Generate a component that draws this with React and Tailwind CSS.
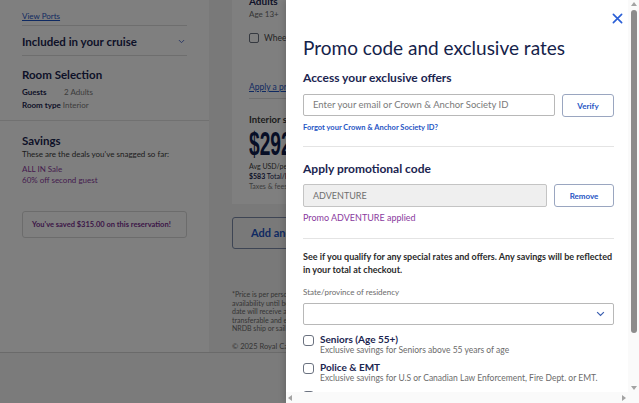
import React from 'react'

const font = { fontFamily: 'Lato, "Liberation Sans", sans-serif' }

const Chevron = ({ className }) => (
  <svg viewBox="0 0 12 8" className={className} fill="none" stroke="currentColor" strokeWidth="1.6">
    <path d="M1.5 1.5 6 6l4.5-4.5" />
  </svg>
)

const Check = ({ title, sub }) => (
  <div className="flex items-start gap-[6px]">
    <div className="w-[11px] h-[11px] mt-[1px] rounded-[3px] border border-[#6b7280] bg-white shrink-0" />
    <div className="flex flex-col">
      <span className="text-[10px] leading-[11px] font-bold text-[#1b2550]">{title}</span>
      <span className="text-[8.5px] leading-[11px] text-[#6b6b6b]">{sub}</span>
    </div>
  </div>
)

const Page = () => (
  <div className="w-[639px] h-[403px] flex flex-col bg-[#f2f2f2] text-[#1b2550]" style={font}>
    <div className="flex h-[352px]">
      {/* left summary column */}
      <div className="w-[209px] bg-white flex flex-col">
        <div className="px-[22px]">
          <div className="h-[26px] pt-[1px] border-b border-[#dcdcdc]">
            <span className="text-[8px] text-[#1f55c4] underline">View Ports</span>
          </div>
          <div className="h-[30px] pt-[2px] flex items-center justify-between border-b border-[#dcdcdc]">
            <span className="text-[11.5px] font-bold">Included in your cruise</span>
            <Chevron className="w-[7px] h-[5px] mr-[2px] text-[#4d6bc9]" />
          </div>
          <div className="pt-[12px] h-[64px]">
            <div className="text-[11.5px] font-bold leading-[14px]">Room Selection</div>
            <div className="mt-[4px] text-[8px] leading-[13px]">
              <div><span className="font-bold inline-block w-[42px]">Guests</span><span className="text-[#7a7a7a]">2 Adults</span></div>
              <div><span className="font-bold">Room type</span> <span className="text-[#7a7a7a]">Interior</span></div>
            </div>
          </div>
        </div>
        <div className="border-t border-[#e2e2e2] px-[22px] pt-[13px] flex-1">
          <div className="text-[11.5px] font-bold leading-[14px]">Savings</div>
          <div className="text-[8px] leading-[12px] text-[#3a3a3a]">These are the deals you've snagged so far:</div>
          <div className="mt-[4px] text-[8px] leading-[11px] text-[#8a3a9e]">
            <div>ALL IN Sale</div>
            <div>60% off second guest</div>
          </div>
          <div className="mt-[25px] h-[27px] border border-[#d8d8d8] rounded-[3px] flex items-center px-[9px] whitespace-nowrap">
            <span className="text-[7.5px] font-bold text-[#7a2f8f]">You've saved $315.00 on this reservation!</span>
          </div>
        </div>
      </div>
      {/* right column */}
      <div className="flex-1 pl-[23px] flex flex-col">
        <div className="bg-white h-[206px] pl-[17px] flex flex-col whitespace-nowrap overflow-hidden">
          <div className="-mt-[5px] text-[10px] font-bold leading-[12px]">Adults</div>
          <div className="text-[8px] text-[#6b6b6b] leading-[12px] mt-[1px]">Age 13+</div>
          <div className="flex items-center gap-[5px] mt-[12px]">
            <div className="w-[10px] h-[10px] border border-[#6b7280] rounded-[2px]" />
            <span className="text-[8.5px] text-[#4a4a4a]">Wheelchair accessible</span>
          </div>
          <div className="mt-[36px] h-[18px] border-b border-[#dcdcdc] text-[8.5px] text-[#1f55c4] underline">Apply a promo code</div>
          <div className="mt-[14px] text-[9.5px] font-bold text-[#3a3a3a]">Interior stateroom</div>
          <div className="mt-[1px] h-[32px] text-[33px] leading-[32px] font-bold text-[#0e1c4d]" style={{ fontFamily: '"Liberation Sans", sans-serif' }}>
            <span className="inline-block origin-left scale-x-[0.58]">$292</span>
          </div>
          <div className="mt-[1px] text-[7px] leading-[10px] text-[#3a3a3a]">Avg USD/person</div>
          <div className="text-[7px] leading-[10px]"><span className="font-bold">$583</span> Total/Per stateroom</div>
          <div className="text-[7px] leading-[10px] text-[#7a7a7a]">Taxes & fees included</div>
        </div>
        <div className="mt-[13px] h-[32px] border border-[#7c8aa8] rounded-[3px] flex items-center pl-[18px] whitespace-nowrap">
          <span className="text-[11px] font-bold text-[#1f55c4]">Add and continue</span>
        </div>
        <div className="mt-[41px] text-[7px] leading-[8.5px] text-[#6b6b6b] whitespace-nowrap">
          <div>*Price is per person based on double occupancy</div>
          <div>availability until booked. Guests booking by the</div>
          <div>date will receive a cruise credit which is non-</div>
          <div>transferable and expires after sail date for any</div>
          <div>NRDB ship or sail date.</div>
        </div>
        <div className="mt-[8px] text-[7.5px] text-[#6b6b6b] whitespace-nowrap">© 2025 Royal Caribbean International</div>
      </div>
    </div>
    <div className="flex-1 bg-[#f7f7f7] border-t border-[#d4d4d4]" />
  </div>
)

const Drawer = () => (
  <div className="absolute top-0 right-0 w-[353px] h-[403px] bg-white flex flex-col shadow-[-2px_0_6px_rgba(0,0,0,0.15)]" style={font}>
    <div className="flex flex-1 min-h-0">
      <div className="flex-1 pl-[17px] pr-[14px] overflow-hidden text-[#1b2550]">
        <div className="h-[30px] flex items-start justify-end pt-[13px] -mr-[9px]">
          <svg viewBox="0 0 12 12" className="w-[11px] h-[11px]" stroke="#2a5fd6" strokeWidth="1.8" strokeLinecap="round">
            <path d="M1.5 1.5l9 9M10.5 1.5l-9 9" />
          </svg>
        </div>
        <div className="mt-[7px] text-[19px] leading-[22px] text-[#15224a]">Promo code and exclusive rates</div>
        <div className="mt-[12px] text-[12px] leading-[14px] font-bold">Access your exclusive offers</div>
        <div className="mt-[9px] flex gap-[7px]">
          <div className="flex-1 h-[22px] border border-[#b8b8b8] rounded-[2px] flex items-center pl-[9px]">
            <span className="text-[9.5px] text-[#7a7a7a]">Enter your email or Crown & Anchor Society ID</span>
          </div>
          <div className="w-[52px] h-[23px] border border-[#9aa6c0] rounded-[3px] flex items-center justify-center">
            <span className="text-[8px] font-bold text-[#1f55c4]">Verify</span>
          </div>
        </div>
        <div className="mt-[6px] text-[7.5px] leading-[10px] font-bold text-[#1f55c4]">Forgot your Crown & Anchor Society ID?</div>
        <div className="mt-[13px] border-t border-[#e4e4e4]" />
        <div className="mt-[15px] text-[12px] leading-[14px] font-bold">Apply promotional code</div>
        <div className="mt-[8px] flex gap-[7px]">
          <div className="flex-1 h-[23px] bg-[#efefef] border border-[#c4c4c4] rounded-[2px] flex items-center pl-[9px]">
            <span className="text-[9px] text-[#6e6e6e]">ADVENTURE</span>
          </div>
          <div className="w-[60px] h-[23px] border border-[#9aa6c0] rounded-[3px] flex items-center justify-center">
            <span className="text-[8px] font-bold text-[#1f55c4]">Remove</span>
          </div>
        </div>
        <div className="mt-[5px] text-[9px] leading-[12px] text-[#8a3a9e]">Promo ADVENTURE applied</div>
        <div className="mt-[14px] border-t border-[#e4e4e4]" />
        <div className="mt-[11px] text-[9px] leading-[13px] font-bold text-[#2b2b2b]">
          See if you qualify for any special rates and offers. Any savings will be reflected in your total at checkout.
        </div>
        <div className="mt-[11px] text-[8px] leading-[10px] text-[#6b6b6b]">State/province of residency</div>
        <div className="mt-[6px] h-[22px] border border-[#b8b8b8] rounded-[2px] flex items-center justify-end pr-[8px]">
          <Chevron className="w-[9px] h-[6px] text-[#3b5fb0]" />
        </div>
        <div className="mt-[9px] flex flex-col gap-[6px]">
          <Check title="Seniors (Age 55+)" sub="Exclusive savings for Seniors above 55 years of age" />
          <Check title="Police & EMT" sub="Exclusive savings for U.S or Canadian Law Enforcement, Fire Dept. or EMT." />
          <Check title="Military" sub="Exclusive savings for Military" />
        </div>
      </div>
      {/* vertical scrollbar */}
      <div className="w-[11px] flex flex-col items-center bg-[#fafafa]">
        <div className="mt-[2px] w-0 h-0 border-l-[3px] border-r-[3px] border-b-[4px] border-l-transparent border-r-transparent border-b-[#a3a3a3]" />
        <div className="mt-[4px] w-[6px] h-[323px] rounded-full bg-[#8c8c8c]" />
        <div className="flex-1" />
        <div className="mb-[2px] w-0 h-0 border-l-[3px] border-r-[3px] border-t-[4px] border-l-transparent border-r-transparent border-t-[#a3a3a3]" />
      </div>
    </div>
    {/* horizontal scrollbar */}
    <div className="h-[11px] flex items-center bg-[#fafafa]">
      <div className="ml-[2px] w-0 h-0 border-t-[3px] border-b-[3px] border-r-[4px] border-t-transparent border-b-transparent border-r-[#a3a3a3]" />
      <div className="flex-1" />
      <div className="mr-[13px] w-0 h-0 border-t-[3px] border-b-[3px] border-l-[4px] border-t-transparent border-b-transparent border-l-[#a3a3a3]" />
    </div>
  </div>
)

export default function App() {
  return (
    <div className="relative w-[639px] h-[403px] overflow-hidden">
      <Page />
      <div className="absolute inset-0 bg-black/50" />
      <Drawer />
    </div>
  )
}
